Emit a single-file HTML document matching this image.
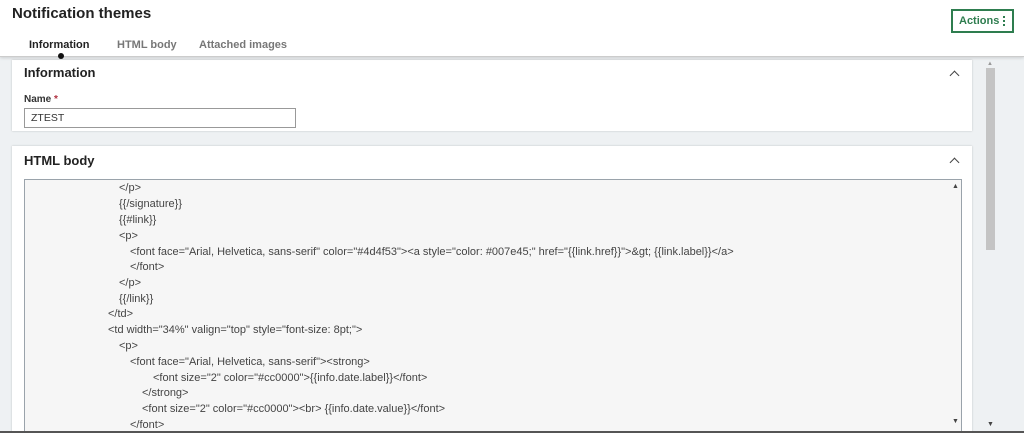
<!DOCTYPE html>
<html style="overflow:hidden;height:433px"><head><style>
html,body{overflow:hidden}
body{margin:0;width:1024px;height:433px;overflow:hidden;background:#eef1f3;font-family:"Liberation Sans",sans-serif;position:relative}
.hdr{position:absolute;left:0;top:0;width:1024px;height:56px;background:#fff;border-bottom:1px solid #ccc;box-shadow:0 1px 3px rgba(0,0,0,.15);z-index:2}
.title{position:absolute;left:12px;top:5px;font-size:15px;font-weight:bold;color:#222}
.tab{position:absolute;top:39px;font-size:11px;font-weight:bold;color:#777}
.act{position:absolute;left:951px;top:9px;width:63px;height:24px;border:2px solid #2e7d4f;box-sizing:border-box;color:#2e7d4f;font-size:11px;font-weight:bold;line-height:20px;padding-left:6px}
.card{position:absolute;left:12px;width:960px;background:#fff;box-shadow:0 0 2px rgba(0,0,0,.2)}
.h{position:absolute;left:12px;font-size:13px;font-weight:bold;color:#222}
.chev{position:absolute;right:14px;width:6px;height:6px;border-left:1.5px solid #444;border-top:1.5px solid #444;transform:rotate(45deg)}
.ta{position:absolute;left:24px;top:179px;width:938px;height:260px;background:#f6f6f6;border:1px solid #9aa3ab;box-sizing:border-box}
.ln{position:absolute;font-size:11px;color:#444;white-space:pre}
</style></head><body>
<div style="position:absolute;left:0;top:0;width:1024px;height:433px;overflow:hidden">
<div class="hdr">
<div class="title">Notification themes</div>
<div class="tab" style="left:29px;color:#222">Information</div>
<div style="position:absolute;left:58px;top:53px;width:6px;height:6px;border-radius:50%;background:#111"></div>
<div class="tab" style="left:117px">HTML body</div>
<div class="tab" style="left:199px">Attached images</div>
<div class="act">Actions
<span style="position:absolute;right:7px;top:5px;width:2px;height:2px;background:#2e7d4f;box-shadow:0 4px 0 #2e7d4f,0 8px 0 #2e7d4f"></span></div>
</div>
<div class="card" style="top:60px;height:71px">
<div class="h" style="top:5px">Information</div>
<div class="chev" style="top:12px"></div>
<div style="position:absolute;left:12px;top:34px;font-size:10px;font-weight:bold;color:#333">Name <span style="color:#b03040">*</span></div>
<div style="position:absolute;left:12px;top:48px;width:272px;height:20px;border:1px solid #999;box-sizing:border-box;font-size:10.5px;color:#333;padding:3px 6px">ZTEST</div>
</div>
<div class="card" style="top:146px;height:300px">
<div class="h" style="top:7px">HTML body</div>
<div class="chev" style="top:13px"></div>
</div>
<div class="ta"></div>
<div style="position:absolute;left:952px;top:183px;font-size:7px;color:#444">▲</div>
<div style="position:absolute;left:952px;top:418px;font-size:7px;color:#444">▼</div>
<div class="ln" style="left:119px;top:182px">&lt;/p&gt;</div>
<div class="ln" style="left:119px;top:198px">{{/signature}}</div>
<div class="ln" style="left:119px;top:214px">{{#link}}</div>
<div class="ln" style="left:119px;top:230px">&lt;p&gt;</div>
<div class="ln" style="left:130px;top:246px">&lt;font face="Arial, Helvetica, sans-serif" color="#4d4f53"&gt;&lt;a style="color: #007e45;" href="{{link.href}}"&gt;&amp;gt; {{link.label}}&lt;/a&gt;</div>
<div class="ln" style="left:130px;top:261px">&lt;/font&gt;</div>
<div class="ln" style="left:119px;top:277px">&lt;/p&gt;</div>
<div class="ln" style="left:119px;top:293px">{{/link}}</div>
<div class="ln" style="left:108px;top:308px">&lt;/td&gt;</div>
<div class="ln" style="left:108px;top:324px">&lt;td width="34%" valign="top" style="font-size: 8pt;"&gt;</div>
<div class="ln" style="left:119px;top:340px">&lt;p&gt;</div>
<div class="ln" style="left:130px;top:356px">&lt;font face="Arial, Helvetica, sans-serif"&gt;&lt;strong&gt;</div>
<div class="ln" style="left:153px;top:372px">&lt;font size="2" color="#cc0000"&gt;{{info.date.label}}&lt;/font&gt;</div>
<div class="ln" style="left:142px;top:387px">&lt;/strong&gt;</div>
<div class="ln" style="left:142px;top:403px">&lt;font size="2" color="#cc0000"&gt;&lt;br&gt; {{info.date.value}}&lt;/font&gt;</div>
<div class="ln" style="left:130px;top:419px">&lt;/font&gt;</div>
<div style="position:absolute;left:982px;top:60px;width:16px;height:373px;background:#eef1f3"></div>
<div style="position:absolute;left:986px;top:68px;width:9px;height:182px;background:#c4c4c4"></div>
<div style="position:absolute;left:987px;top:61px;font-size:6px;color:#999">▲</div>
<div style="position:absolute;left:987px;top:421px;font-size:7px;color:#444">▼</div>
<div style="position:absolute;left:0;top:431px;width:1024px;height:2px;background:#555"></div>
</div>
</body></html>
